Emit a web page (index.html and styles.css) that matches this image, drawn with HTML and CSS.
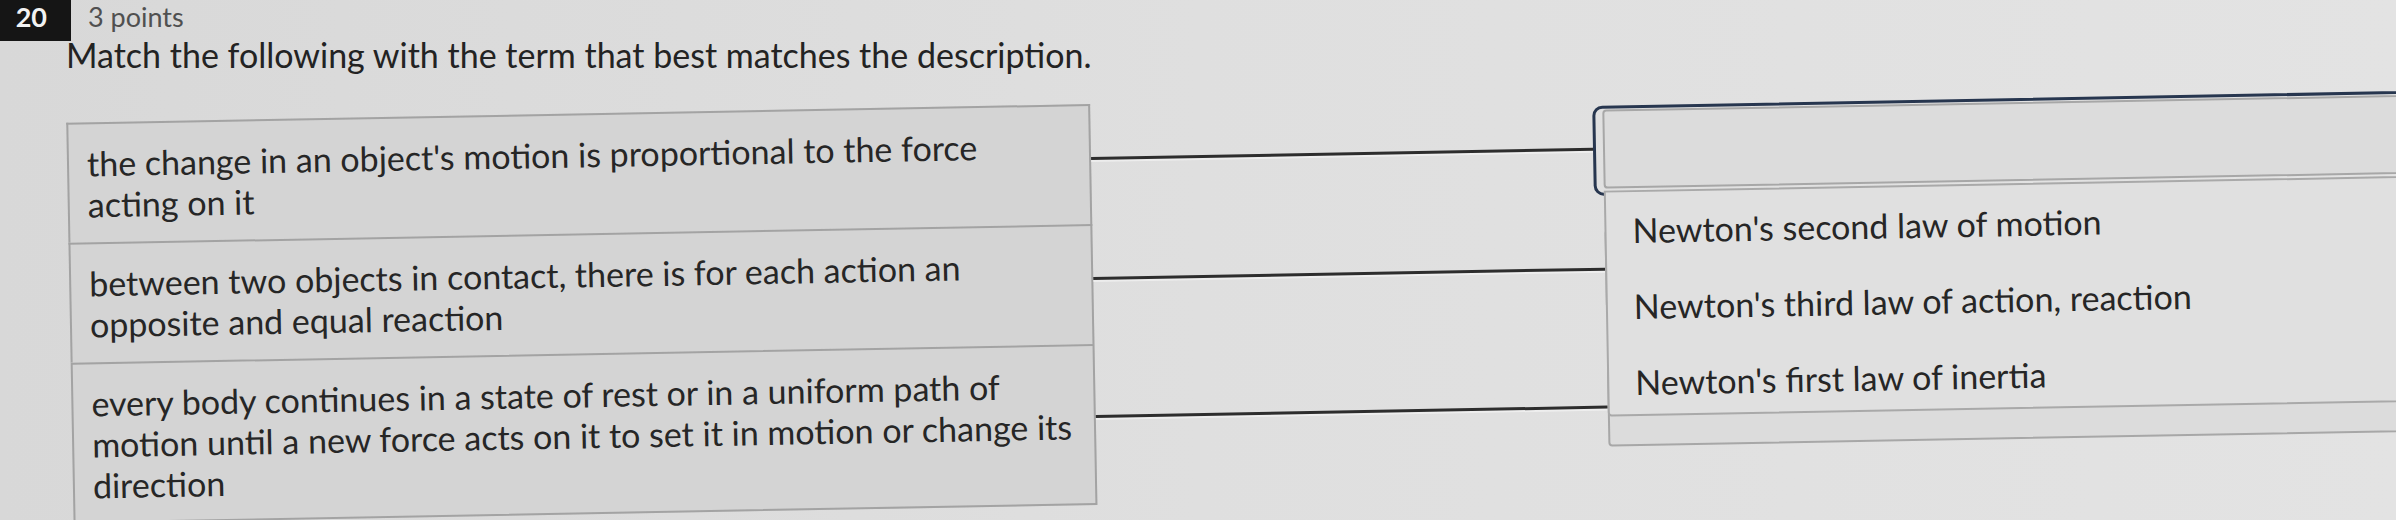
FILE: index.html
```html
<!DOCTYPE html>
<html lang="en">
<head>
<meta charset="utf-8">
<title>Question 20</title>
<link rel="stylesheet" href="styles.css">
</head>
<body>
<header class="qhead">
  <div class="qnum">20</div>
  <div class="qpts">3 points</div>
</header>
<h1 class="qtext">Match the following with the term that best matches the description.</h1>
<div class="page">
  <div class="match">
    <div class="cell">the change in an object's motion is proportional to the force<br>acting on it</div>
    <div class="link"><span class="wire wire-short"></span></div>
    <div class="slot">
      <div class="drop focus">
        <ul class="menu">
          <li>Newton's second law of motion</li>
          <li>Newton's third law of action, reaction</li>
          <li>Newton's first law of inertia</li>
        </ul>
      </div>
    </div>

    <div class="cell">between two objects in contact, there is for each action an opposite and equal reaction</div>
    <div class="link"><span class="wire"></span></div>
    <div class="slot"><div class="drop"></div></div>

    <div class="cell last">every body continues in a state of rest or in a uniform path of motion until a new force acts on it to set it in motion or change its direction</div>
    <div class="link"><span class="wire"></span></div>
    <div class="slot"><div class="drop"></div></div>
  </div>
</div>
</body>
</html>
```

FILE: styles.css
```css
html {
  margin: 0;
  height: 100%;
  overflow: hidden;
  background: linear-gradient(90deg, #d8d8d8 0%, #dfdfdf 50%, #e3e3e3 100%);
}
body {
  margin: 0;
  height: 100%;
  font-family: Lato, "Open Sans", sans-serif;
  color: #262626;
}
.qhead {
  display: flex;
  align-items: flex-start;
  height: 41px;
}
.qnum {
  display: flex;
  justify-content: flex-end;
  box-sizing: border-box;
  width: 71px;
  height: 41px;
  padding-right: 24px;
  background: #151515;
  color: #f2f2f2;
  font-size: 27px;
  font-weight: 700;
  line-height: 33px;
}
.qpts {
  margin-left: 17px;
  font-size: 27px;
  line-height: 33px;
  color: #505050;
}
.qtext {
  margin: -7px 0 0 66px;
  font-size: 34px;
  font-weight: 400;
  line-height: 41px;
  color: #232323;
}
.page {
  width: 2700px;
  margin-top: 49px;
  transform: rotate(-1.05deg);
  transform-origin: 0 -124px;
}
.match {
  display: grid;
  grid-template-columns: 1024px 512px 1000px;
  margin-left: 64px;
}
.cell {
  border: 2px solid #a3a3a3;
  border-bottom: 0;
  background: #d4d4d4;
  padding: 18px 12px 18px 18px;
  font-size: 34px;
  line-height: 41px;
}
.cell.last {
  border-bottom: 2px solid #a3a3a3;
  padding-bottom: 16px;
}
.link {
  display: flex;
  align-items: center;
  padding-bottom: 12px;
}
.last + .link {
  padding-bottom: 17px;
}
.wire {
  flex: 1;
  height: 3px;
  background: #2d2d2d;
  box-shadow: 0 2px 0 rgba(255, 255, 255, 0.45);
}
.wire-short {
  margin-right: 10px;
}
.slot {
  display: flex;
  align-items: center;
  padding-bottom: 12px;
}
.last + .link + .slot {
  padding-bottom: 17px;
}
.drop {
  position: relative;
  box-sizing: border-box;
  width: 100%;
  height: 79px;
  border: 2px solid #a7a7a7;
  border-radius: 4px;
  background: #dcdcdc;
}
.drop.focus::before {
  content: "";
  position: absolute;
  top: -6px;
  left: -12px;
  right: -6px;
  bottom: -9px;
  border: 3px solid #27364f;
  border-radius: 10px;
}
.menu {
  position: absolute;
  z-index: 2;
  top: calc(100% + 4px);
  left: -2px;
  width: calc(100% + 4px);
  box-sizing: border-box;
  margin: 0;
  padding: 17px 0 12px 26px;
  list-style: none;
  display: flex;
  flex-direction: column;
  gap: 35px;
  border: 2px solid #a9a9a9;
  border-radius: 0 0 4px 4px;
  background: #e0e0e0;
  font-size: 34px;
  line-height: 41px;
  color: #262626;
}
```
